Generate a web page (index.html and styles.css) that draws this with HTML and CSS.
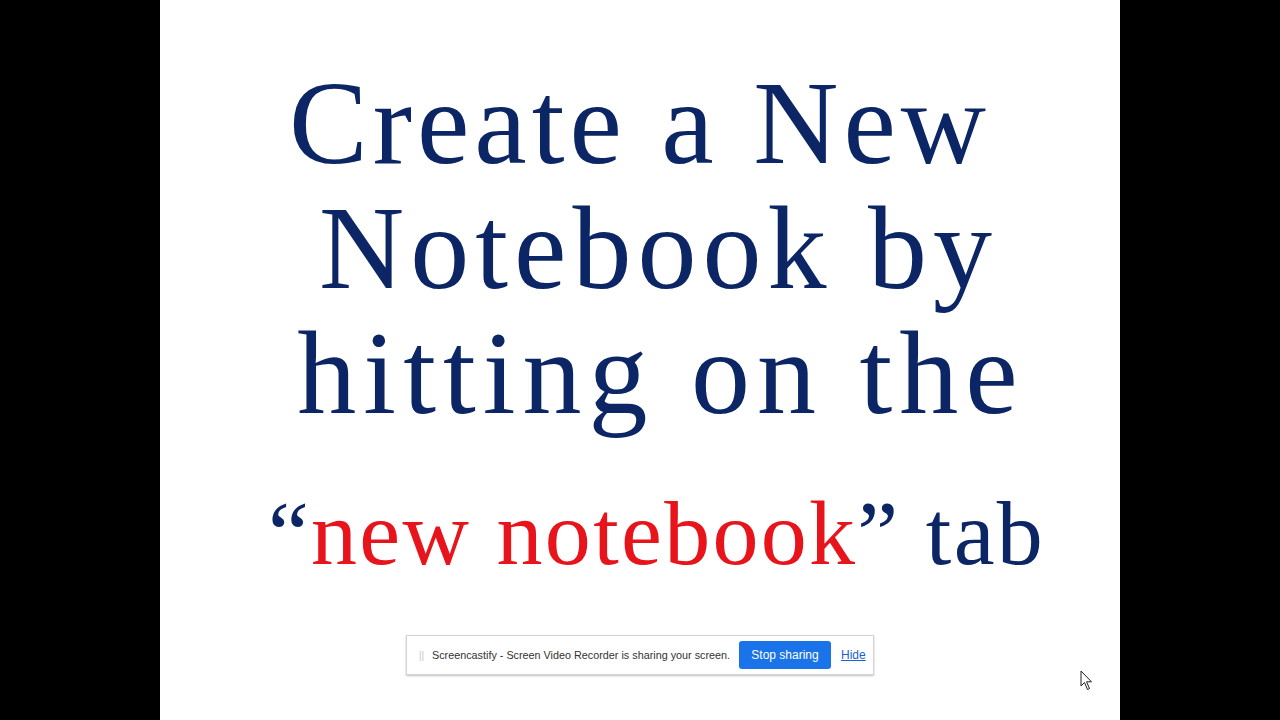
FILE: index.html
```html
<!DOCTYPE html>
<html lang="en">
<head>
    <meta charset="UTF-8">
    <title>Create a New Notebook</title>
    <link rel="stylesheet" href="styles.css">
</head>
<body>
   <div class="slide">
     <div class="title">
       <div class="line l1">Create a New</div>
       <div class="line l2">Notebook by</div>
       <div class="line l3">hitting on the</div>
       <div class="line l4">&ldquo;<span class="red">new notebook</span>&rdquo; tab</div>
     </div>
     <div class="sharebar">
       <span class="grip">||</span>
       <span class="msg">Screencastify - Screen Video Recorder is sharing your screen.</span>
       <button class="stop">Stop sharing</button>
       <a class="hide" href="#">Hide</a>
     </div>
     <svg class="cursor" width="14" height="22" viewBox="0 0 14 22">
       <path d="M1 1 L1 16 L4.5 12.5 L7.5 19.5 L9.5 18.6 L6.6 11.8 L11.5 11.8 Z" fill="#fff" stroke="#222" stroke-width="1"/>
     </svg>
   </div>
</body>
</html>
```

FILE: styles.css
```css
* {
  box-sizing: border-box;
}
body{
  margin: 0;
  background-color: #000;
  display: flex;
  justify-content: center;
  height: 720px;
  overflow: hidden;
}
.slide{
  position: relative;
  width: 960px;
  height: 720px;
  background-color: #fff;
}
.title{
  padding-top: 61px;
  font-family: "Liberation Serif", "DejaVu Serif", serif;
  color: #0c2665;
  text-align: center;
}
.line{
  font-size: 118px;
  line-height: 125px;
  white-space: nowrap;
}
.l1{
  letter-spacing: 5px;
}
.l2{
  letter-spacing: 6px;
  padding-left: 37px;
}
.l3{
  letter-spacing: 7px;
  padding-left: 42px;
}
.l4{
  font-size: 92px;
  line-height: 100px;
  letter-spacing: 2.3px;
  margin-top: 47px;
  padding-left: 33px;
}
.red{
  color: #e8141c;
}
.sharebar{
  position: absolute;
  left: 246px;
  top: 635px;
  width: 468px;
  height: 40px;
  display: flex;
  align-items: center;
  padding: 0 0 0 12px;
  background-color: #fff;
  border: 1px solid #d4d4d4;
  box-shadow: 0 1px 2px rgba(0,0,0,0.25);
  font-family: "Liberation Sans", Arial, sans-serif;
  font-size: 10.8px;
  color: #333;
}
.grip{
  color: #c8c8c8;
  font-size: 10px;
  width: 13px;
}
.msg{
  white-space: nowrap;
  width: 307px;
}
.stop{
  border: none;
  background-color: #1a73e8;
  color: #fff;
  font-family: inherit;
  font-size: 12px;
  height: 28px;
  width: 92px;
  border-radius: 3px;
  margin-right: 10px;
  padding: 0;
}
.hide{
  color: #1a5fd0;
  font-size: 12px;
}
.cursor{
  position: absolute;
  left: 920px;
  top: 670px;
}
```
